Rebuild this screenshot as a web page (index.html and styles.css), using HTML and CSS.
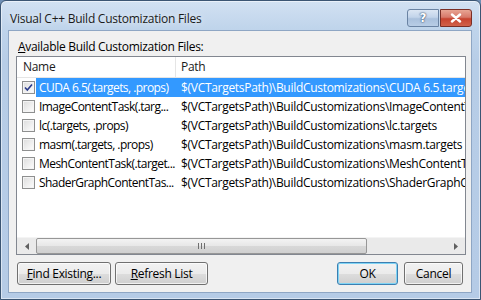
FILE: index.html
```html
<!DOCTYPE html>
<html>
<head>
<meta charset="utf-8">
<link rel="stylesheet" href="styles.css">
</head>
<body>
<div class="window">
  <div class="titlebar">
    <div class="title">Visual C++ Build Customization Files</div>
    <div class="caption-buttons">
      <div class="cap-btn help">?</div>
      <div class="cap-btn close">
        <svg width="12" height="10" viewBox="0 0 12 10"><path d="M2 1.5 L10 8.5 M10 1.5 L2 8.5" stroke="#fff" stroke-width="2.4" stroke-linecap="round"/></svg>
      </div>
    </div>
  </div>
  <div class="client">
    <div class="label"><u>A</u>vailable Build Customization Files:</div>
    <div class="listbox">
      <div class="list-inner">
        <div class="header">
          <div class="hcell c1">Name</div>
          <div class="hcell c2">Path</div>
        </div>
        <div class="rows">
          <div class="row selected">
            <div class="cell c1"><span class="check on"><svg width="11" height="11" viewBox="0 0 11 11"><path d="M2 5.5 L4.3 8 L9 2.5" fill="none" stroke="#2a3a8a" stroke-width="1.6"/></svg></span><span class="text hl">CUDA 6.5(.targets, .props)</span></div>
            <div class="cell c2 hl">$(VCTargetsPath)\BuildCustomizations\CUDA 6.5.targets</div>
          </div>
          <div class="row">
            <div class="cell c1"><span class="check"></span><span class="text">ImageContentTask(.targ...</span></div>
            <div class="cell c2">$(VCTargetsPath)\BuildCustomizations\ImageContentTask.targets</div>
          </div>
          <div class="row">
            <div class="cell c1"><span class="check"></span><span class="text">lc(.targets, .props)</span></div>
            <div class="cell c2">$(VCTargetsPath)\BuildCustomizations\lc.targets</div>
          </div>
          <div class="row">
            <div class="cell c1"><span class="check"></span><span class="text">masm(.targets, .props)</span></div>
            <div class="cell c2">$(VCTargetsPath)\BuildCustomizations\masm.targets</div>
          </div>
          <div class="row">
            <div class="cell c1"><span class="check"></span><span class="text">MeshContentTask(.target...</span></div>
            <div class="cell c2">$(VCTargetsPath)\BuildCustomizations\MeshContentTask.targets</div>
          </div>
          <div class="row">
            <div class="cell c1"><span class="check"></span><span class="text">ShaderGraphContentTas...</span></div>
            <div class="cell c2">$(VCTargetsPath)\BuildCustomizations\ShaderGraphContentTask.targets</div>
          </div>
        </div>
        <div class="hscroll">
          <div class="arrow left"><svg width="4" height="7" viewBox="0 0 4 7"><path d="M4 0 L0 3.5 L4 7 Z" fill="#606060"/></svg></div>
          <div class="track">
            <div class="thumb"><span class="grip"></span><span class="grip"></span><span class="grip"></span></div>
          </div>
          <div class="arrow right"><svg width="4" height="7" viewBox="0 0 4 7"><path d="M0 0 L4 3.5 L0 7 Z" fill="#606060"/></svg></div>
        </div>
      </div>
    </div>
    <div class="buttons">
      <div class="btn find"><u>F</u>ind Existing...</div>
      <div class="btn refresh"><u>R</u>efresh List</div>
      <div class="spacer"></div>
      <div class="btn ok default">OK</div>
      <div class="btn cancel">Cancel</div>
    </div>
  </div>
</div>
</body>
</html>
```

FILE: styles.css
```css
* { box-sizing: border-box; }
html, body { margin: 0; padding: 0; }
body {
  width: 481px;
  height: 300px;
  overflow: hidden;
  font-family: "Open Sans", "Noto Sans", sans-serif;
  font-size: 12px;
  letter-spacing: -0.3px;
  color: #000;
  background: #6f8fb5;
}
.window {
  width: 481px;
  height: 300px;
  border: 1px solid #3b5573;
  border-radius: 6px 6px 0 0;
  background: linear-gradient(#d2e1f2 0px, #bfd4eb 28px, #b7cde7 60px, #b5cbe6 100%);
  display: flex;
  flex-direction: column;
  box-shadow: inset 0 0 0 1px rgba(255,255,255,0.5);
}
.titlebar {
  height: 29px;
  display: flex;
  align-items: flex-start;
  padding: 0 8px 0 9px;
}
.title {
  flex: 1;
  padding-top: 9px;
  font-size: 12px;
  letter-spacing: -0.25px;
  color: #1a1a1a;
  text-shadow: 0 0 6px rgba(255,255,255,0.9);
}
.caption-buttons {
  display: flex;
  padding-top: 8px;
  gap: 1px;
}
.cap-btn {
  height: 18px;
  border: 1px solid #6a83a3;
  display: flex;
  align-items: center;
  justify-content: center;
}
.help {
  width: 32px;
  border-radius: 3px 0 0 3px;
  background: linear-gradient(#dbe6f3 0%, #c2d4ea 45%, #a9c0dc 55%, #b8cde6 100%);
  color: #fff;
  font-weight: bold;
  font-size: 12px;
  letter-spacing: 0;
  font-family: "DejaVu Sans", sans-serif;
  text-shadow: 0 0 1px #2d4466, 0 0 2px #2d4466;
  line-height: 1;
}
.close {
  width: 32px;
  border-color: #7a2e25;
  border-radius: 0 3px 3px 0;
  background: linear-gradient(#e8a594 0%, #d7796a 45%, #c7432f 55%, #d1624a 100%);
}
.client {
  flex: 1;
  margin: 0 8px 6px 7px;
  background: #f0f0f0;
  border: 1px solid #8ea6c4;
  display: flex;
  flex-direction: column;
  padding: 0 5px 0 7px;
}
.label {
  height: 25px;
  padding-top: 7px;
  padding-left: 2px;
}
.listbox {
  height: 199px;
  border: 1px solid #828790;
  background: #fff;
}
.list-inner {
  height: 100%;
  display: flex;
  flex-direction: column;
}
.header {
  height: 21px;
  display: flex;
  border-bottom: 1px solid #e5e5e5;
}
.hcell {
  padding-left: 6px;
  line-height: 20px;
  color: #1a1a1a;
}
.c1 { width: 159px; flex: none; }
.header .c1 { border-right: 1px solid #e5e5e5; }
.c2 { flex: 1; white-space: nowrap; overflow: hidden; }
.header .c2 { padding-left: 5px; }
.rows { flex: 1; }
.row {
  height: 19px;
  display: flex;
  align-items: stretch;
  white-space: nowrap;
}
.cell {
  display: flex;
  align-items: center;
  overflow: hidden;
}
.cell.c1 { padding-left: 5px; }
.cell.c2 { padding-left: 5px; display: block; line-height: 19px; }
.check {
  width: 13px;
  height: 13px;
  flex: none;
  border: 1px solid #8e8f8f;
  background: linear-gradient(135deg, #dcdcdc, #fefefe);
  box-shadow: inset 0 0 0 1px #f4f4f4;
  display: flex;
  align-items: center;
  justify-content: center;
  margin-right: 1px;
}
.text {
  padding-left: 3px;
  height: 19px;
  line-height: 19px;
  flex: 1;
  letter-spacing: -0.55px;
}
.hl { background: #3399ff; color: #fff; }
.hscroll {
  height: 17px;
  display: flex;
  background: #eaeaea;
  border-top: 1px solid #f4f4f4;
}
.arrow {
  width: 19px;
  display: flex;
  align-items: center;
  justify-content: center;
}
.track { flex: 1; display: flex; }
.thumb {
  width: 331px;
  height: 16px;
  border: 1px solid #979797;
  border-radius: 2px;
  background: linear-gradient(#f3f3f3, #e7e7e7 50%, #d8d8d8 51%, #d0d0d0);
  display: flex;
  justify-content: center;
  align-items: center;
  gap: 2px;
}
.grip {
  width: 1px;
  height: 6px;
  background: #6f6f6f;
}
.buttons {
  display: flex;
  margin-top: 7px;
  padding-left: 1px;
}
.btn {
  height: 23px;
  border: 1px solid #707070;
  border-radius: 3px;
  background: linear-gradient(#f2f2f2 0%, #ebebeb 50%, #dddddd 51%, #cfcfcf 100%);
  box-shadow: inset 0 0 0 1px rgba(255,255,255,0.7);
  display: flex;
  align-items: center;
  justify-content: center;
}
.find { width: 94px; }
.refresh { width: 93px; margin-left: 4px; }
.spacer { flex: 1; }
.ok { width: 61px; }
.default {
  border-color: #3c7fb1;
  box-shadow: inset 0 0 0 1px #7fd4f5;
}
.cancel { width: 59px; margin-left: 6px; margin-right: 3px; }
u { text-decoration: underline; text-underline-offset: 1px; }
```
